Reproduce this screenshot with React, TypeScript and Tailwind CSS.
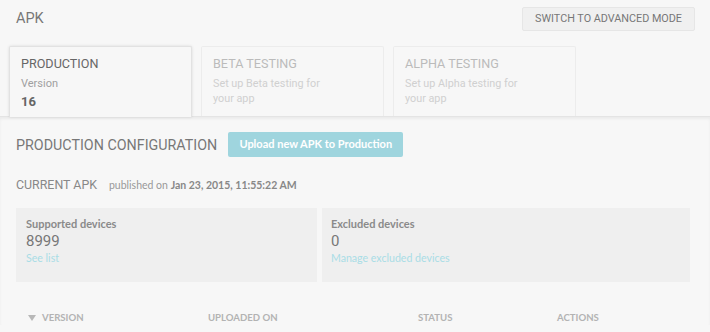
import React from "react";

const tabs = [
  { title: "PRODUCTION", sub: "Version", value: "16", active: true },
  { title: "BETA TESTING", sub: "Set up Beta testing for your app" },
  { title: "ALPHA TESTING", sub: "Set up Alpha testing for your app" },
];

const App = () => {
  return (
    <div className="w-[710px] h-[332px] overflow-hidden bg-[#f7f7f7] font-['Roboto',sans-serif]">
      {/* top bar */}
      <div className="flex items-start justify-between pl-4 pr-[15px] pt-[7px]">
        <h1 className="text-[14.5px] leading-[20px] text-[#777] pt-[2px]">APK</h1>
        <button className="h-[24px] px-[12px] bg-[#f0f0f0] border border-[#e6e6e6] rounded-[2px] text-[10.8px] text-[#777]">
          SWITCH TO ADVANCED MODE
        </button>
      </div>

      {/* tabs */}
      <div className="flex gap-[9px] pl-[9px] mt-[15px] relative z-10">
        {tabs.map((t) => (
          <div
            key={t.title}
            className={
              t.active
                ? "w-[183px] h-[71px] -mb-[1px] bg-[#f7f7f7] border border-b-0 border-[#e2e2e2] rounded-t-[2px] shadow-[0_0_3px_rgba(0,0,0,0.12)] pl-[11px] pt-[9px]"
                : "w-[183px] h-[70px] border border-b-0 border-[#ececec] rounded-t-[2px] pl-[11px] pt-[9px]"
            }
          >
            <div className={"text-[12.6px] leading-[16px] " + (t.active ? "text-[#666]" : "text-[#bbb]")}>{t.title}</div>
            {t.active ? (
              <>
                <div className="text-[11px] leading-[14px] mt-[5px] text-[#a0a0a0]">{t.sub}</div>
                <div className="text-[13px] leading-[16px] mt-[3px] font-bold text-[#666]">{t.value}</div>
              </>
            ) : (
              <div className="text-[10.8px] leading-[15px] mt-[4px] w-[120px] text-[#d0d0d0]">{t.sub}</div>
            )}
          </div>
        ))}
      </div>

      {/* configuration panel */}
      <div className="relative border-t border-[#e4e4e4] shadow-[inset_0_2px_3px_rgba(0,0,0,0.05)] bg-[#f7f7f7] pl-4 pr-5 pt-[15px]">
        <div className="flex items-center gap-[11px]">
          <h2 className="text-[14.3px] leading-[20px] text-[#777]">PRODUCTION CONFIGURATION</h2>
          <button className="h-[25px] w-[175px] bg-[#9fd5de] rounded-[2px] text-[11px] font-bold text-white font-['Lato',sans-serif]">
            Upload new APK to Production
          </button>
        </div>

        <div className="flex items-baseline gap-[12px] mt-[19px]">
          <span className="text-[12.4px] text-[#888]">CURRENT APK</span>
          <span className="text-[10.5px] text-[#999] font-['Lato',sans-serif]">
            published on <span className="font-bold text-[#888]">Jan 23, 2015, 11:55:22 AM</span>
          </span>
        </div>

        <div className="flex gap-[5px] mt-[13px] font-['Lato',sans-serif]">
          <div className="w-[301px] h-[74px] bg-[#efefef] pl-[10px] pt-[9px]">
            <div className="text-[11px] leading-[14px] font-bold text-[#8a8a8a]">Supported devices</div>
            <div className="text-[15px] leading-[18px] mt-[1px] text-[#777] font-['Roboto',sans-serif]">8999</div>
            <div className="text-[10.6px] leading-[14px] mt-[1px] text-[#a9dde6]">See list</div>
          </div>
          <div className="w-[368px] h-[74px] bg-[#efefef] pl-[9px] pt-[9px]">
            <div className="text-[11px] leading-[14px] font-bold text-[#8a8a8a]">Excluded devices</div>
            <div className="text-[15px] leading-[18px] mt-[1px] text-[#777] font-['Roboto',sans-serif]">0</div>
            <div className="text-[10.6px] leading-[14px] mt-[1px] text-[#a9dde6]">Manage excluded devices</div>
          </div>
        </div>

        <div className="grid grid-cols-[180px_210px_139px_100px] mt-[29px] pl-[12px] text-[9.6px] font-bold text-[#b3b3b3] font-['Lato',sans-serif]">
          <div className="flex items-center gap-[6px]">
            <svg width="8" height="6" viewBox="0 0 8 6">
              <path d="M0 0h8L4 6z" fill="#b8b8b8" />
            </svg>
            VERSION
          </div>
          <div>UPLOADED ON</div>
          <div>STATUS</div>
          <div>ACTIONS</div>
        </div>
      </div>
    </div>
  );
};

export default App;
